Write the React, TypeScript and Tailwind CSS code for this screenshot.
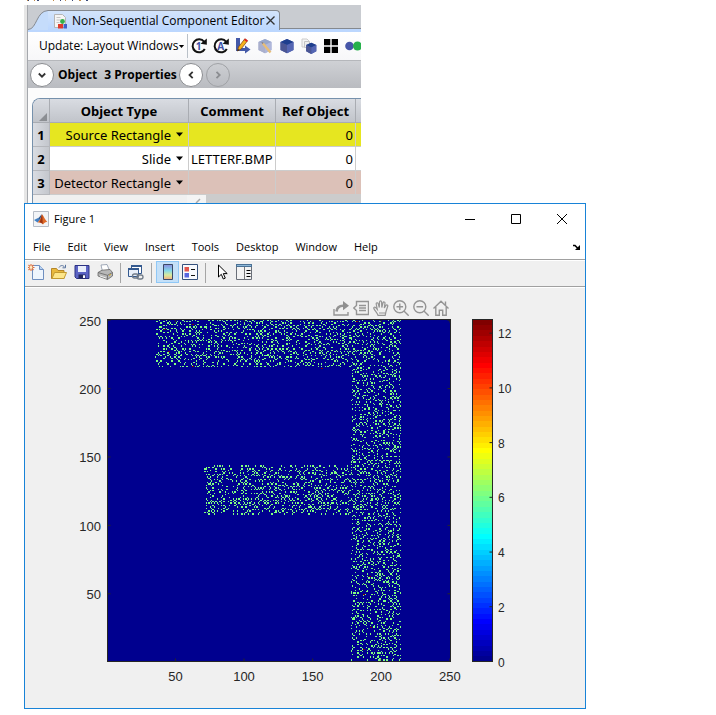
import React from 'react';
import clsx from 'clsx';

interface NceRow {
  id: number;
  type: string;
  comment: string;
  refObject: number;
  tone: string;
}

const rows: NceRow[] = [
  { id: 1, type: 'Source Rectangle', comment: '', refObject: 0, tone: 'bg-[#e6e620]' },
  { id: 2, type: 'Slide', comment: 'LETTERF.BMP', refObject: 0, tone: 'bg-white' },
  { id: 3, type: 'Detector Rectangle', comment: '', refObject: 0, tone: 'bg-[#dcc1b8]' },
];

const menus = ['File', 'Edit', 'View', 'Insert', 'Tools', 'Desktop', 'Window', 'Help'];

/* ---------- detector data ---------- */

const CELLS = 250;
const AXES = { x: 82.5, y: 3.5, w: 343, h: 342 };

const inLetter = (c: number, r: number) =>
  (c >= 34 && c < 214 && r < 35) ||
  (c >= 177 && c < 214) ||
  (c >= 70 && c < 178 && r >= 107 && r < 143);

const buildHits = () => {
  let seed = 20177;
  const next = () => {
    seed = (seed + 0x6d2b79f5) | 0;
    let t = Math.imul(seed ^ (seed >>> 15), 1 | seed);
    t = (t + Math.imul(t ^ (t >>> 7), 61 | t)) ^ t;
    return ((t ^ (t >>> 14)) >>> 0) / 4294967296;
  };
  const px = (c: number) => 83 + Math.ceil((c * 342) / CELLS);
  const py = (r: number) => 4 + Math.floor((r * 341) / CELLS);
  const taken = new Set<number>();
  let d = '';
  for (let r = 0; r < CELLS; r++) {
    for (let c = 0; c < CELLS; c++) {
      if (!inLetter(c, r)) continue;
      const edge = c === 34 || c === 177 || c === 70;
      const roll = next();
      const crowded = taken.has(r * CELLS + c - 1) || taken.has((r - 1) * CELLS + c);
      if (roll > (edge ? 0.08 : crowded ? 0.02 : 0.27)) continue;
      taken.add(r * CELLS + c);
      d += `M${px(c)} ${py(r)}h${px(c + 1) - px(c)}v${py(r + 1) - py(r)}h-${px(c + 1) - px(c)}z`;
    }
  }
  return d;
};

const hits = buildHits();

// Cells that were hit twice
const doubles = [
  [139, 13], [167, 8], [143, 35], [167, 50], [331, 5], [296, 52], [344, 260], [338, 278], [345, 311], [338, 333],
];

const jet = Array.from({ length: 64 }, (_, i) => {
  const v = (i + 1) / 16;
  const ch = (o: number) => Math.round(255 * Math.max(0, Math.min(1, 1.5 - Math.abs(v - o))));
  return `rgb(${ch(3)},${ch(2)},${ch(1)})`;
});

const ticks = [50, 100, 150, 200, 250];
const barTicks = [0, 2, 4, 6, 8, 10, 12];

const DetectorPlot = () => {
  const { x, y, w, h } = AXES;
  const bottom = y + h;
  const tx = (v: number) => x + ((v - 0.5) * w) / CELLS;
  const ty = (v: number) => bottom - ((v - 0.5) * h) / CELLS;
  const tb = (v: number) => bottom - (v * h) / 12.5;

  return (
    <svg viewBox="0 0 560 392" className="block h-auto w-full overflow-visible font-['Liberation_Sans',sans-serif]" role="img" aria-label="Figure 1">
      <rect x={x} y={y} width={w} height={h} fill="#00008f" />
      <path d={hits} fill="#80ff80" shapeRendering="crispEdges" />
      {doubles.map(([a, b]) => (
        <rect key={`${a}-${b}`} x={a} y={b} width="2" height="1" fill="#800000" />
      ))}
      <rect x={x} y={y} width={w} height={h} fill="none" stroke="#262626" />
      {ticks.map((t) => (
        <g key={t} fill="#262626" fontSize="13">
          <path
            d={`M${tx(t)} ${bottom}v-3M${tx(t)} ${y}v3M${x} ${ty(t)}h3M${x + w} ${ty(t)}h-3`}
            stroke="#262626"
          />
          <text x={tx(t)} y="365" textAnchor="middle">{t}</text>
          <text x="76" y={Math.round(ty(t) + 5.4)} textAnchor="end">{t}</text>
        </g>
      ))}

      {/* Colour bar */}
      {jet.map((fill, i) => (
        <rect
          key={i}
          x="447.5"
          width="20"
          y={bottom - ((i + 1) * h) / 64}
          height={h / 64 + 0.3}
          fill={fill}
          shapeRendering="crispEdges"
        />
      ))}
      <rect x="447.5" y={y} width="20" height={h} fill="none" stroke="#262626" />
      {barTicks.map((t) => (
        <g key={t} fill="#262626" fontSize="12">
          <path d={`M467.5 ${tb(t)}h-3`} stroke="#262626" />
          <text x="473" y={Math.round(tb(t) + 5)}>{t}</text>
        </g>
      ))}
    </svg>
  );
};

/* ---------- icons ---------- */

const Icon = ({ children, className }: { children: React.ReactNode; className?: string }) => (
  <svg viewBox="0 0 16 16" className={clsx('block size-4 shrink-0', className)} fill="none" aria-hidden="true">
    {children}
  </svg>
);

const Caret = ({ className }: { className?: string }) => (
  <svg viewBox="0 0 7 5" className={clsx('block w-[7px] h-[5px] shrink-0', className)} aria-hidden="true">
    <path d="M0 .5h7L3.5 4.5z" fill="#000" />
  </svg>
);

const Refresh = ({ letter }: { letter: string }) => (
  <Icon>
    <path d="M13.2 3.800A6.500 6.500 0 1 0 13.800 11" stroke="#111" strokeWidth="2" />
    <path d="M9.500 5.800 15.800 6.800V.600z" fill="#111" />
    <text x="7.700" y="11.500" textAnchor="middle" fontSize="10" fontWeight="bold" fill="#3f51a8">{letter}</text>
  </Icon>
);

const Cube = ({ faded }: { faded?: boolean }) => (
  <g opacity={faded ? 0.45 : 1}>
    <path d="M8 1 14.5 4v8L8 15.3 1.5 12V4z" fill="#4459a8" />
    <path d="M8 1 14.5 4 8 7 1.5 4z" fill="#1f3f8e" />
    <path d="M8 7v8.3l6.5-3.3V4z" fill="#5566b4" />
    <path d="M1.5 4 8 7v8.3L1.5 12z" fill="#4b5694" />
  </g>
);

const editorTools = [
  { name: 'Update once', art: <Refresh letter="1" /> },
  { name: 'Update all', art: <Refresh letter="A" /> },
  {
    name: 'Edit coordinates',
    art: (
      <Icon>
        <path d="M1 0h4v10h5V7.5l5.500 4-5.500 4V13H1z" fill="#4459a8" />
        <path d="m2.500 13 1-4L9.800.8l2.700 2-6.200 8z" fill="#f5b21c" stroke="#7a3b10" strokeWidth=".7" />
        <path d="m9 1.900 1-1.500 2.900 2L11.700 4z" fill="#d22" />
        <path d="m2.300 13.300.6-2.300 1.500 1z" fill="#222" />
      </Icon>
    ),
  },
  {
    name: 'Modify object',
    art: (
      <Icon>
        <Cube faded />
        <path d="M6 5.500 13.500 14.500" stroke="#e8bd76" strokeWidth="2.400" />
        <path d="m4.500 4 2 .8-1.200 1.200z" fill="#8a7a70" />
      </Icon>
    ),
  },
  { name: 'Object', art: <Icon><Cube /></Icon> },
  {
    name: 'Copy object',
    art: (
      <Icon>
        <path d="M1 1h5l2 2v6H1z" fill="#f4f4f4" stroke="#ccc" />
        <path d="M3.500 3.500h5v6h-5z" fill="#eee" stroke="#c4c4c4" />
        <g transform="translate(4 4) scale(.78)"><Cube /></g>
      </Icon>
    ),
  },
  { name: 'Grid', art: <Icon><path d="M1 1h6.300v6.300H1zM8.700 1H15v6.300H8.700zM1 8.700h6.300V15H1zM8.700 8.700H15V15H8.700z" fill="#000" /></Icon> },
  {
    name: 'Detectors',
    art: (
      <Icon>
        <circle cx="4.500" cy="8" r="4.300" fill="#4656a8" />
        <circle cx="12.500" cy="8" r="4.500" fill="#27b14c" />
      </Icon>
    ),
  },
];

const fileTools = [
  {
    name: 'New Figure',
    art: (
      <Icon>
        <path d="M4.500 1.500h7l4 4v10h-11z" fill="#eef5fd" stroke="#6f8fc0" />
        <path d="M11.500 1.500v4h4" fill="#b9d3f2" stroke="#6f8fc0" />
        <path d="M3 0v7M-.500 3.500h7M.500 1l5 5M5.500 1l-5 5" stroke="#e0703c" strokeWidth="1.100" />
        <circle cx="3" cy="3.500" r="1.400" fill="#fff0c8" />
      </Icon>
    ),
  },
  {
    name: 'Open File',
    art: (
      <Icon>
        <path d="M.500 14.500v-10h5l1.500 2h6v8z" fill="#e9b93d" stroke="#b5862a" />
        <path d="M1 14.500 3.500 8.500h12L13 14.500z" fill="#fde68a" stroke="#c39a30" />
        <path d="M8 3.500c1.500-2.500 4-2.500 5.500-.5M14.500.8v3h-3" stroke="#59749f" />
      </Icon>
    ),
  },
  {
    name: 'Save Figure',
    art: (
      <Icon>
        <path d="M1 1.500h14v13H2.500L1 13z" fill="#5b63c4" stroke="#2c3283" />
        <path d="M4 2h8v6H4z" fill="#e9eefb" />
        <path d="M4.500 10.500h7v4h-7z" fill="#23285e" />
        <path d="M9 11.300h2v2.700H9z" fill="#fff" />
      </Icon>
    ),
  },
  {
    name: 'Print Figure',
    art: (
      <Icon>
        <path d="m4 1 6-.5 2.500 6-7 1z" fill="#fff" stroke="#8a96a8" strokeWidth=".8" />
        <path d="m1 8.500 4-2.300 8-.7 2.500 3v3.500l-5 3.500L1 12z" fill="#b8b8b8" stroke="#666" strokeWidth=".8" />
        <path d="m1 8.500 9.500 2.800 5-2.800M10.500 11.300v4" stroke="#666" strokeWidth=".8" />
        <path d="m3 12 6 2" stroke="#eee" />
        <path d="m12 11.500 2-1.200" stroke="#d8b030" />
      </Icon>
    ),
  },
];

const linkTool = {
  name: 'Link Plot',
  art: (
    <Icon>
      <path d="M3.500 1.500h10v8h-10z" fill="#fff" stroke="#34598f" />
      <path d="M3 1h11v2H3z" fill="#34598f" />
      <path d="M.500 4.500h10v8H.500z" fill="#e8eff9" stroke="#34598f" />
      <path d="M0 4h11v2H0z" fill="#34598f" />
      <rect x="4.500" y="10" width="6" height="4" rx="2" stroke="#707b88" strokeWidth="1.300" />
      <rect x="9" y="11" width="6" height="4" rx="2" stroke="#707b88" strokeWidth="1.300" />
    </Icon>
  ),
};

const legendTool = {
  name: 'Insert Legend',
  art: (
    <Icon>
      <path d="M.500.500h15v15H.500z" fill="#f7f9fd" stroke="#34507c" />
      <path d="M2.500 3H7v4.500H2.500z" fill="#e2544c" />
      <path d="M2.500 9H7v4.500H2.500z" fill="#5866e0" />
      <path d="M9 5.500h4M9 11.500h4" stroke="#111" />
    </Icon>
  ),
};

const axesTools = [
  { name: 'Export', art: <><path d="M1 9v6h14v-3" /><path d="M3.500 11.500C4 7.500 6.500 5.800 10 5.800" strokeWidth="2.600" /><path d="m10 1 6 4.700-6 4.500z" fill="#8f8f8f" stroke="none" /></> },
  { name: 'Data Tips', art: <path d="M3.500 1.500h12v13h-12V10.500L.8 8l2.700-2.500zM6 5.500h7M6 8h7M6 10.500h7" /> },
  { name: 'Pan', art: <path d="M5 15.300C4 12.500 1.500 10.500.8 8.300c-.3-1 1-1.600 1.900-.6L4.300 9.500 3.200 4c-.2-1.500 1.600-1.700 2-.4L6.300 7.500 6.500 2c.1-1.500 2-1.500 2.100 0l.2 5.500L10 2.800c.4-1.300 2.200-1 2 .4L11.300 8l1.600-2.600c.7-1.100 2.300-.4 1.800.9L13 11.500l-.8 3.800zM6 13h6.500" strokeWidth="1.200" /> },
  { name: 'Zoom In', art: <path d="M6.800 12.800a6 6 0 1 0 0-12 6 6 0 0 0 0 12zM11.200 11.200l4.500 4.500M3.500 6.800h6.600M6.800 3.500v6.600" /> },
  { name: 'Zoom Out', art: <path d="M6.800 12.800a6 6 0 1 0 0-12 6 6 0 0 0 0 12zM11.200 11.200l4.500 4.500M3.500 6.800h6.600" /> },
  { name: 'Restore View', art: <path d="M.5 8.500 8 1.200l7.500 7.300M2.800 7v8.300h3.500v-5h3.400v5h3.500V7M12.500 5V1.500" /> },
];

/* ---------- editor ---------- */

const Round = ({ label, path, faded }: { label: string; path: string; faded?: boolean }) => (
  <button
    aria-label={label}
    className={clsx(
      'flex size-6 shrink-0 items-center justify-center rounded-full border',
      faded ? 'border-[#a0a2a6] text-[#8b8d91]' : 'border-[#8a8c90] bg-white text-[#333]',
    )}
  >
    <svg viewBox="0 0 8 8" className="block size-2" fill="none" stroke="currentColor" strokeWidth="1.8">
      <path d={path} />
    </svg>
  </button>
);

const ComponentEditor = () => (
  <section className="w-3/5 overflow-hidden whitespace-nowrap border-l-[3px] border-[#e6e6e6] font-['Open_Sans','Noto_Sans',sans-serif] text-[12px] text-black">
    <div className="border-l border-[#a5a8ad]">
      {/* Tab strip */}
      <div className="flex h-6 items-end bg-[#c9ccd1]">
        <svg viewBox="0 0 20 20" className="-mb-px block size-5 shrink-0" aria-hidden="true">
          <path d="M0 19.500C9 19.500 8 1 20 .5V20H0z" fill="#c5dcfb" />
          <path d="M0 19.500C9 19.500 8 1 20 .5" fill="none" stroke="#85898f" />
        </svg>
        <div className="-mb-px flex h-5 items-center rounded-tr border-t border-r border-[#85898f] bg-gradient-to-b from-[#d3e4fb] to-[#bcd7fe] pl-1 pr-1">
          <Icon>
            <path d="M2.500 1.500h8l3 3v10h-11z" fill="#f5f5f5" stroke="#b5b5b5" />
            <path d="M4.500 4.500h4M4.500 7h4M4.500 9.500h3" stroke="#c5c5c5" />
            <circle cx="10.500" cy="8.500" r="2.400" fill="#35b04a" />
            <path d="M6 11h5v4.500H6z" fill="#e03a2c" />
            <path d="M11.500 11H15v4.500h-3.500z" fill="#4060c8" />
          </Icon>
          <span className="ml-1">Non-Sequential Component Editor</span>
          <button aria-label="Close tab" className="ml-[2px]">
            <svg viewBox="0 0 9 9" className="block size-[9px]" stroke="#333" strokeWidth="1.300">
              <path d="m.5.5 8 8M8.500.500l-8 8" />
            </svg>
          </button>
        </div>
        <div className="h-px flex-1 bg-[#85898f]" />
      </div>
      <div className="h-[3px] bg-[#bcd7fe]" />

      {/* Toolbar */}
      <div className="flex h-7 items-center bg-gradient-to-b from-white to-[#f7f7f9] pl-[11px]">
        <button className="flex w-[143px] shrink-0 items-center justify-between">
          <span>Update: Layout Windows</span>
          <Caret className="scale-75" />
        </button>
        <span className="ml-[5px] mr-[3px] h-6 w-px shrink-0 bg-[#b9c0c8]" />
        <div className="flex gap-[6px]">
          {editorTools.map((tool) => (
            <button key={tool.name} aria-label={tool.name}>{tool.art}</button>
          ))}
        </div>
      </div>

      {/* Object bar */}
      <div className="flex h-7 items-center border-t border-[#b5b7bb] bg-gradient-to-b from-[#cfd1d5] to-[#b9bbc0] pl-[2px] font-bold">
        <Round label="Expand" path="M.8 2.500 4 5.700l3.200-3.200" />
        <span className="ml-1">Object</span>
        <span className="ml-[7px]">3 Properties</span>
        <span className="ml-[2px] flex gap-[3px]">
          <Round label="Previous object" path="M5.700.8 2.500 4l3.200 3.200" />
          <Round label="Next object" path="M2.500.8 5.700 4 2.500 7.200" faded />
        </span>
      </div>

      {/* Spreadsheet */}
      <div className="bg-[#fcfcfc] pl-1 pt-[10px]">
        <div className="overflow-hidden rounded-tl-lg border-l border-t border-[#7691ac]">
          <table className="w-full table-fixed border-separate border-spacing-0 font-['Noto_Sans','Open_Sans',sans-serif] text-[13px] leading-5">
            <colgroup>
              <col className="w-[17px]" />
              <col className="w-[139px]" />
              <col className="w-[87px]" />
              <col className="w-[80px]" />
              <col />
            </colgroup>
            <thead>
              <tr className="h-6 bg-gradient-to-b from-[#d9dce2] to-[#c0c3c9]">
                <th className="border-b border-r border-[#a9acb2] p-0" aria-label="Row">
                  <svg viewBox="0 0 8 8" className="ml-auto mr-[2px] mt-3 block size-2"><path d="M8 0v8H0z" fill="#8b8e93" /></svg>
                </th>
                {['Object Type', 'Comment', 'Ref Object'].map((h) => (
                  <th key={h} className="border-b border-r border-[#a9acb2] p-0 text-center font-bold">{h}</th>
                ))}
                <th className="border-b border-[#a9acb2] p-0" aria-label="More" />
              </tr>
            </thead>
            <tbody>
              {rows.map((row) => (
                <tr key={row.id} className={clsx('h-6', row.tone)}>
                  <th className="border-b border-r border-[#b5b7bc] bg-gradient-to-r from-[#d9dce2] to-[#c4c7cd] p-0 text-center font-bold">{row.id}</th>
                  <td className="border-b border-r border-[#ccc] p-0">
                    <label className="flex items-center justify-end gap-[5px] pr-[5px]">
                      <select aria-label={`Object ${row.id} type`} defaultValue={row.type} className="appearance-none bg-transparent [field-sizing:content]">
                        <option>{row.type}</option>
                      </select>
                      <Caret />
                    </label>
                  </td>
                  <td className="border-b border-r border-[#ccc] p-0 pl-[2px]">{row.comment}</td>
                  <td className="border-b border-r border-[#ccc] p-0 pr-[2px] text-right">{row.refObject}</td>
                  <td className="border-b border-[#ccc] p-0" />
                </tr>
              ))}
            </tbody>
          </table>
          <div className="flex h-2 bg-[#f0f0f0]">
            <span className="w-[154px]" />
            <span className="w-[19px] bg-[#f4f4f4]">
              <svg viewBox="0 0 19 8" className="block h-2" fill="none" stroke="#aaa" strokeWidth="1.500"><path d="m13 4-4 4" /></svg>
            </span>
            <span className="flex-1 bg-[#ccc]" />
          </div>
        </div>
      </div>
    </div>
  </section>
);

/* ---------- figure window ---------- */

const Divider = () => <span className="mt-[2px] h-5 w-px shrink-0 bg-[#a5a5a5]" />;

const FigureWindow = () => (
  <section className="border border-[#1883d7] bg-white font-['Open_Sans','Noto_Sans',sans-serif] text-[11px] leading-4 text-black">
    <header className="flex h-[30px] items-center pl-2">
      <Icon>
        <path d="M.500.500h15v15H.500z" fill="#f2f4f7" stroke="#b6bcc6" />
        <path d="m1 9 4-2 2 2-2.500 2.500z" fill="#3f7fc4" />
        <path d="M5 7.200C7 6 7.500 4 9 3.200L7 9z" fill="#2b5a94" />
        <path d="M9 3.200c2 2 3 5.800 5.500 8-2-.5-3 .5-4.500 2.300-1-1.500-2-2-5.500-2C7 9 8 6.500 9 3.200z" fill="#e06a28" />
        <path d="M9 3.200c.7 3 .5 6 .8 10-1-1.500-1.800-1.700-3.300-1.800C8 8 8 6 9 3.200z" fill="#9c3412" />
      </Icon>
      <h1 className="ml-[5px]">Figure 1</h1>
      <div className="ml-auto flex">
        {[
          ['Minimize', 'M0 5.500h10'],
          ['Maximize', 'M.5.5h9v9h-9z'],
          ['Close', 'm0 0 10 10M10 0 0 10'],
        ].map(([name, d]) => (
          <button key={name} aria-label={name} className="flex h-7 w-[46px] items-center justify-center">
            <svg viewBox="0 0 10 10" className="block size-[10px] overflow-visible" fill="none" stroke="#000"><path d={d} /></svg>
          </button>
        ))}
      </div>
    </header>

    <nav className="flex h-[26px] items-center gap-[17px] border-b border-[#a0a0a0] pl-2 pr-[5px]">
      {menus.map((m) => (
        <button key={m}>{m}</button>
      ))}
      <button aria-label="Dock Figure" className="ml-auto">
        <svg viewBox="0 0 7 6" className="block h-[6px] w-[7px]" fill="none"><path d="M0 1.500h2L5.500 5" stroke="#000" strokeWidth="1.600" /><path d="M7 1v5H2z" fill="#000" /></svg>
      </button>
    </nav>

    <div className="mt-px flex h-[26px] border-b border-[#a0a0a0] bg-[#f0f0f0] pl-[3px]">
      <div className="flex h-[22px] items-center gap-[7px]">
        {fileTools.map((t) => (
          <button key={t.name} aria-label={t.name}>{t.art}</button>
        ))}
        <Divider />
        <button aria-label={linkTool.name}>{linkTool.art}</button>
        <Divider />
      </div>
      <div className="ml-1 flex h-[22px] items-center">
        <button aria-label="Insert Colorbar" className="flex h-[22px] w-[23px] items-center justify-center border border-[#90c8f6] bg-[#c4e0f8]">
          <Icon>
            <defs>
              <linearGradient id="cb" x1="0" y1="0" x2="0" y2="1">
                <stop offset="0" stopColor="#8c8ce0" />
                <stop offset=".4" stopColor="#82d8ea" />
                <stop offset=".7" stopColor="#d8ec9c" />
                <stop offset="1" stopColor="#f3ad80" />
              </linearGradient>
            </defs>
            <path d="M3.500.500h9v15h-9z" fill="url(#cb)" stroke="#3a4a68" />
          </Icon>
        </button>
        <button aria-label={legendTool.name} className="ml-[3px] mr-[7px]">{legendTool.art}</button>
        <Divider />
        <button aria-label="Edit Plot" className="ml-[9px]">
          <Icon>
            <path d="M3.500 1v12l2.800-2.700 2 4.700 2-.9-2-4.500h3.900z" fill="#fff" stroke="#000" />
          </Icon>
        </button>
        <button aria-label="Open Property Inspector" className="ml-[5px]">
          <Icon>
            <path d="M.500.500h15v15H.500z" fill="#f3f3f3" stroke="#6a6f78" />
            <path d="M0 0h16v3H0z" fill="#4b7195" />
            <path d="M1 1h14v1H1z" fill="#8db8d8" />
            <path d="M8.500 3v12" stroke="#777" />
            <path d="M10.500 6.500h4M10.500 9.500h4M10.500 12.500h4" stroke="#000" />
          </Icon>
        </button>
      </div>
    </div>

    <div className="mt-px bg-[#f0f0f0] pt-3">
      <div className="flex w-[76%] justify-end gap-1 pr-[2px]">
        {axesTools.map((t) => (
          <button key={t.name} aria-label={t.name}>
            <Icon><g stroke="#949494" strokeWidth="1.400">{t.art}</g></Icon>
          </button>
        ))}
      </div>
      <DetectorPlot />
    </div>
  </section>
);

export default function App() {
  return (
    <main className="min-h-screen bg-white pl-6 pr-[130px]">
      {/* Descenders of the line above */}
      <svg viewBox="0 0 68 5" className="block h-[5px] w-[68px]" aria-hidden="true">
        <path d="M3 0h1v1H3zM10 0h1v1h-1zM29 0h1v1h-1zM41 0h1v1h-1zM55 0h2v1h-2z" fill="#c08a4a" />
        <path d="M4 0h1v1H4zM13 0h2v1h-2zM36 0h1v1h-1zM48 0h1v1h-1zM62 0h2v1h-2z" fill="#3a4a7a" />
      </svg>
      <ComponentEditor />
      <FigureWindow />
    </main>
  );
}
